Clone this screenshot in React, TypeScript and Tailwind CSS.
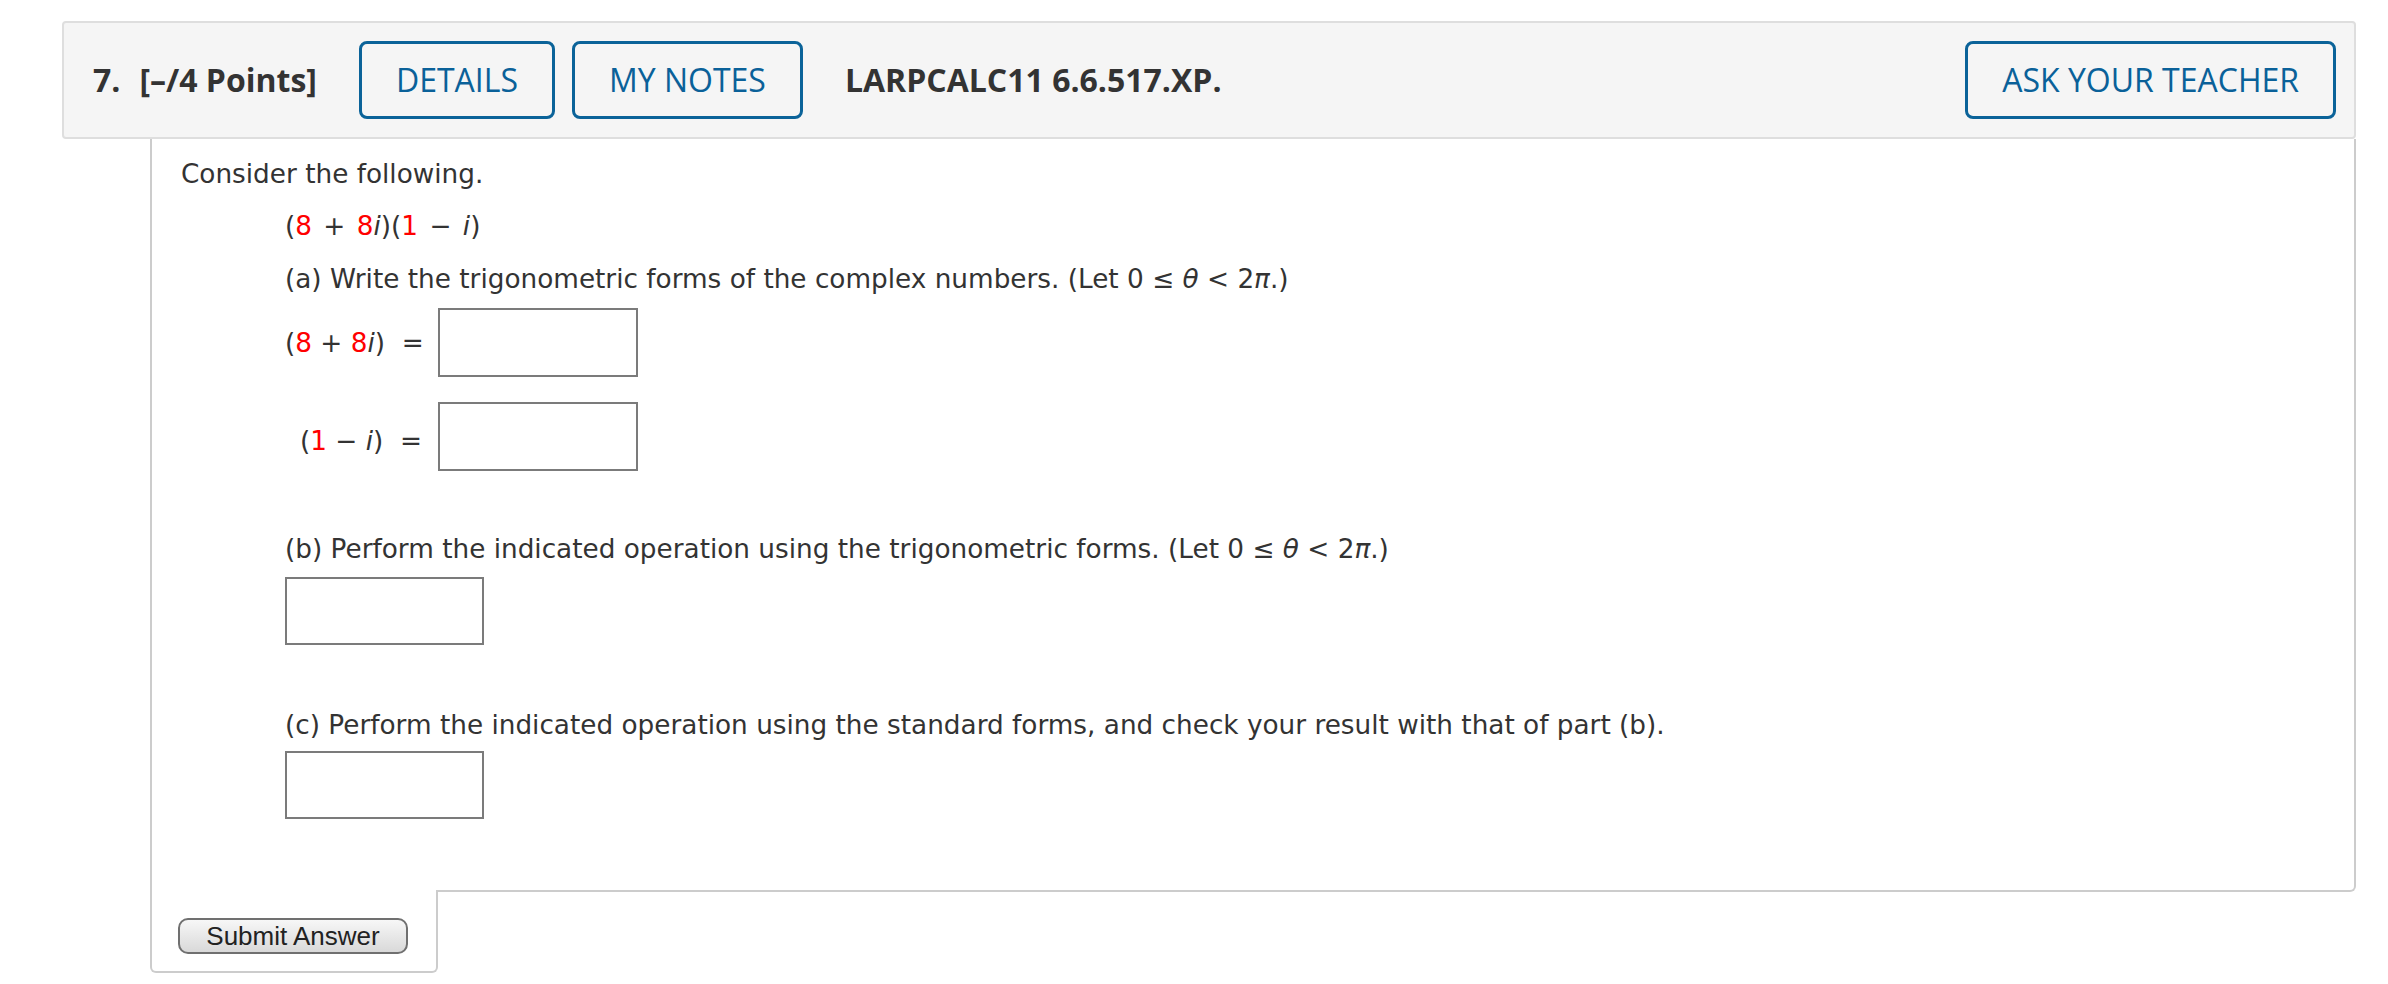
import React from 'react';

const headerBtn =
  "h-[78px] px-[34px] border-[3px] border-[#0b6399] rounded-lg text-[#0a6199] text-[32px] leading-none font-medium flex items-center";

const AnswerBox: React.FC<{ className?: string }> = ({ className = '' }) => (
  <div className={`border-2 border-[#7b7b7b] bg-white ${className}`} />
);

const Red: React.FC<{ children: React.ReactNode }> = ({ children }) => (
  <span className="text-[#ff0000]">{children}</span>
);

export default function App() {
  return (
    <div className="min-h-screen bg-white pt-[21px] pl-[62px] pr-[32px] font-['DejaVu_Sans',Verdana,sans-serif] text-[#333333]">
      {/* question header */}
      <div className="flex items-center h-[118px] border-2 border-[#dedede] rounded bg-[#f5f5f5] pl-[29px] pr-[18px] font-['Open_Sans',sans-serif]">
        <span className="text-[32px] font-bold text-[#333]">7.</span>
        <span className="ml-[19px] text-[32px] font-bold text-[#333]">[–/4 Points]</span>
        <button className={`ml-[42px] ${headerBtn}`}>DETAILS</button>
        <button className={`ml-[17px] ${headerBtn}`}>MY NOTES</button>
        <span className="ml-[42px] text-[32px] font-bold text-[#333]">LARPCALC11 6.6.517.XP.</span>
        <button className={`ml-auto ${headerBtn}`}>ASK YOUR TEACHER</button>
      </div>

      {/* question body */}
      <div className="ml-[88px]">
        <div className="border-x-2 border-b-2 border-[#cccccc] rounded-br-md pt-[20px] pl-[29px] pb-[71px] text-[26.3px] leading-[30px]">
          <p>Consider the following.</p>
          <div className="ml-[104px]">
            <p className="mt-[22px] whitespace-pre [word-spacing:3px]">
              (<Red>8</Red> + <Red>8</Red><i>i</i>)(<Red>1</Red> − <i>i</i>)
            </p>
            <p className="mt-[23px]">
              (a) Write the trigonometric forms of the complex numbers. (Let 0 ≤ <i>θ</i> &lt; 2<i>π</i>.)
            </p>
            <div className="mt-[14px] flex items-center">
              <span className="w-[137px] text-right whitespace-pre">
                (<Red>8</Red> + <Red>8</Red><i>i</i>)  =
              </span>
              <AnswerBox className="ml-[16px] w-[200px] h-[69px]" />
            </div>
            <div className="mt-[25px] flex items-center">
              <span className="w-[137px] text-right whitespace-pre pt-[8px]">
                (<Red>1</Red> − <i>i</i>)  =
              </span>
              <AnswerBox className="ml-[16px] w-[200px] h-[69px]" />
            </div>
            <p className="mt-[63px]">
              (b) Perform the indicated operation using the trigonometric forms. (Let 0 ≤ <i>θ</i> &lt; 2<i>π</i>.)
            </p>
            <AnswerBox className="mt-[13px] w-[199px] h-[68px]" />
            <p className="mt-[65px]">
              (c) Perform the indicated operation using the standard forms, and check your result with that of part (b).
            </p>
            <AnswerBox className="mt-[11px] w-[199px] h-[68px]" />
          </div>
        </div>
        <div className="relative -mt-[2px] w-[288px] bg-white border-x-2 border-b-2 border-[#cccccc] rounded-b-md pt-[28px] pb-[17px] pl-[26px]">
          <button className="h-[36px] w-[230px] border-2 border-[#707070] rounded-[10px] bg-gradient-to-b from-[#f7f7f7] to-[#d9d9d9] text-[26px] leading-none text-[#222] font-['Liberation_Sans',Arial,sans-serif]">
            Submit Answer
          </button>
        </div>
      </div>
    </div>
  );
}
